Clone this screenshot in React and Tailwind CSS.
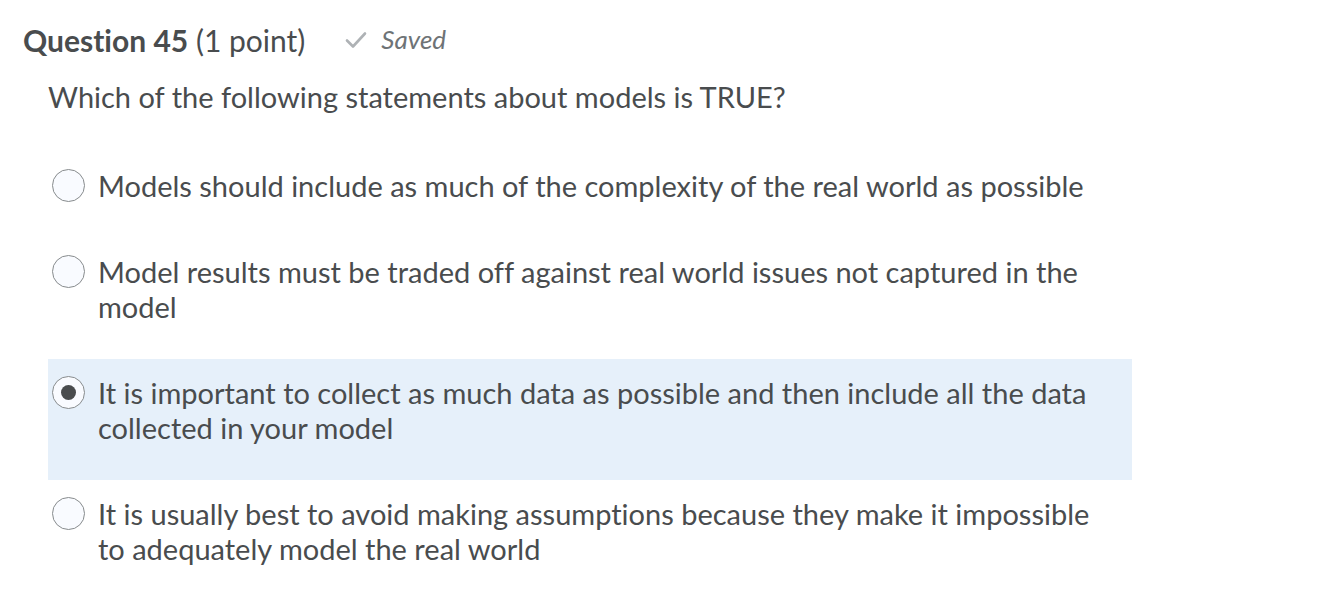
import React, { useState } from 'react';

const options = [
  'Models should include as much of the complexity of the real world as possible',
  'Model results must be traded off against real world issues not captured in the model',
  'It is important to collect as much data as possible and then include all the data collected in your model',
  'It is usually best to avoid making assumptions because they make it impossible to adequately model the real world',
];

const Radio = ({ checked }) => (
  <span className="mt-px flex h-[33px] w-[33px] shrink-0 items-center justify-center rounded-full border border-[#878b8d] bg-[#f9fbff]">
    {checked && <span className="h-[15px] w-[15px] rounded-full bg-[#494c4e]" />}
  </span>
);

const App = () => {
  const [selected, setSelected] = useState(2);

  return (
    <div
      className="min-h-screen bg-white text-[#494c4e] [font-variant-ligatures:none] [font-feature-settings:'liga'_0,'clig'_0]"
      style={{ fontFamily: 'Lato, "Open Sans", sans-serif' }}
    >
      <div className="pl-[23px] pt-[20px]">
        {/* Header */}
        <div className="flex items-center">
          <h2 className="text-[30px] leading-[38px]">
            <span className="font-bold">Question 45</span> (1 point)
          </h2>
          <div className="ml-[40px] flex items-center text-[#6e7376]">
            <svg width="22" height="18" viewBox="0 0 22 18" className="mr-[14px]">
              <path d="M2 9.5l6 6L20 2.5" fill="none" stroke="#aeb2b5" strokeWidth="2.6" strokeLinecap="round" strokeLinejoin="round" />
            </svg>
            <span className="text-[26px] italic">Saved</span>
          </div>
        </div>

        {/* Question */}
        <p className="mt-[20px] pl-[25px] text-[29px] leading-[35px]">
          Which of the following statements about models is TRUE?
        </p>

        {/* Options */}
        <div className="ml-[25px] mt-[38px] w-[1084px]">
          {options.map((text, i) => (
            <label
              key={i}
              onClick={() => setSelected(i)}
              className={`flex cursor-pointer items-start gap-[13px] pb-[35px] pl-[4px] pr-[30px] pt-[16px] ${
                selected === i ? 'bg-[#e6f0fa]' : ''
              }`}
            >
              <Radio checked={selected === i} />
              <span className="text-[29px] leading-[35px]">{text}</span>
            </label>
          ))}
        </div>
      </div>
    </div>
  );
};

export default App;
